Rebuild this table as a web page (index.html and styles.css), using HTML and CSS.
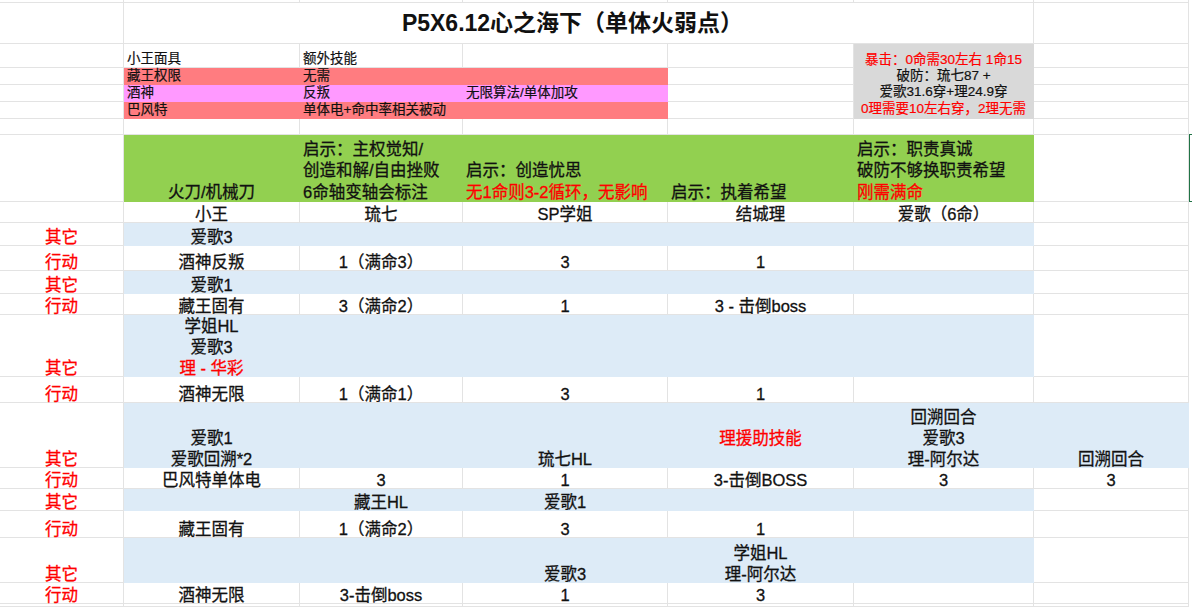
FILE: index.html
```html
<!DOCTYPE html>
<html lang="zh-CN">
<head>
<meta charset="utf-8">
<title>P5X6.12心之海下</title>
<link rel="stylesheet" href="styles.css">
</head>
<body>
<div class="sheet">
  <!-- row 0 -->
  <div class="c"></div><div class="c"></div><div class="c"></div><div class="c"></div><div class="c"></div><div class="c"></div><div class="c"></div>
  <!-- row 1 title -->
  <div class="c"></div><div class="c title"><span>P5X6.12心之海下（单体火弱点）</span></div><div class="c"></div>
  <!-- row 2 -->
  <div class="c"></div><div class="c info"><span>小王面具</span></div><div class="c info"><span>额外技能</span></div><div class="c"></div><div class="c"></div>
  <div class="c gy"><span class="red">暴击：0命需30左右 1命15</span><span>破防：琉七87 +</span><span>爱歌31.6穿+理24.9穿</span><span class="red">0理需要10左右穿，2理无需</span></div>
  <div class="c"></div>
  <!-- row 3 -->
  <div class="c"></div><div class="c info rd"><span>藏王权限</span></div><div class="c info rd"><span>无需</span></div><div class="c info rd"></div><div class="c"></div><div class="c"></div>
  <!-- row 4 -->
  <div class="c"></div><div class="c info pk"><span>酒神</span></div><div class="c info pk"><span>反叛</span></div><div class="c info pk"><span>无限算法/单体加攻</span></div><div class="c"></div><div class="c"></div>
  <!-- row 5 -->
  <div class="c"></div><div class="c info rd"><span>巴风特</span></div><div class="c info rd"><span>单体电+命中率相关被动</span></div><div class="c info rd"></div><div class="c"></div><div class="c"></div>
  <!-- row 6 -->
  <div class="c"></div><div class="c"></div><div class="c"></div><div class="c"></div><div class="c"></div><div class="c"></div><div class="c"></div>
  <!-- row 7 green header -->
  <div class="c"></div>
  <div class="c gr"><span>火刀/机械刀</span></div>
  <div class="c gr lft"><span>启示：主权觉知/<br>创造和解/自由挫败<br>6命轴变轴会标注</span></div>
  <div class="c gr lft"><span>启示：创造忧思<br><em class="red">无1命则3-2循环，无影响</em></span></div>
  <div class="c gr lft"><span>启示：执着希望</span></div>
  <div class="c gr lft"><span>启示：职责真诚<br>破防不够换职责希望<br><em class="red">刚需满命</em></span></div>
  <div class="c sel"></div>
  <!-- row 8 -->
  <div class="c"></div><div class="c"><span>小王</span></div><div class="c"><span>琉七</span></div><div class="c"><span>SP学姐</span></div><div class="c"><span>结城理</span></div><div class="c"><span>爱歌（6命）</span></div><div class="c"></div>
  <!-- row 9 -->
  <div class="c red"><span>其它</span></div><div class="c bl"><span>爱歌3</span></div><div class="c bl"></div><div class="c bl"></div><div class="c bl"></div><div class="c bl"></div><div class="c"></div>
  <!-- row 10 -->
  <div class="c red"><span>行动</span></div><div class="c"><span>酒神反叛</span></div><div class="c"><span>1（满命3）</span></div><div class="c"><span>3</span></div><div class="c"><span>1</span></div><div class="c"></div><div class="c"></div>
  <!-- row 11 -->
  <div class="c red"><span>其它</span></div><div class="c bl"><span>爱歌1</span></div><div class="c bl"></div><div class="c bl"></div><div class="c bl"></div><div class="c bl"></div><div class="c"></div>
  <!-- row 12 -->
  <div class="c red"><span>行动</span></div><div class="c"><span>藏王固有</span></div><div class="c"><span>3（满命2）</span></div><div class="c"><span>1</span></div><div class="c"><span>3 - 击倒boss</span></div><div class="c"></div><div class="c"></div>
  <!-- row 13 -->
  <div class="c red"><span>其它</span></div><div class="c bl"><span>学姐HL<br>爱歌3<br><em class="red">理 - 华彩</em></span></div><div class="c bl"></div><div class="c bl"></div><div class="c bl"></div><div class="c bl"></div><div class="c"></div>
  <!-- row 14 -->
  <div class="c red"><span>行动</span></div><div class="c"><span>酒神无限</span></div><div class="c"><span>1（满命1）</span></div><div class="c"><span>3</span></div><div class="c"><span>1</span></div><div class="c"></div><div class="c"></div>
  <!-- row 15 -->
  <div class="c red"><span>其它</span></div><div class="c bl"><span>爱歌1<br>爱歌回溯*2</span></div><div class="c bl"></div><div class="c bl"><span>琉七HL</span></div><div class="c bl"><span><em class="red">理援助技能</em><br>&nbsp;</span></div><div class="c bl"><span>回溯回合<br>爱歌3<br>理-阿尔达</span></div><div class="c bl"><span>回溯回合</span></div>
  <!-- row 16 -->
  <div class="c red"><span>行动</span></div><div class="c"><span>巴风特单体电</span></div><div class="c"><span>3</span></div><div class="c"><span>1</span></div><div class="c"><span>3-击倒BOSS</span></div><div class="c"><span>3</span></div><div class="c"><span>3</span></div>
  <!-- row 17 -->
  <div class="c red"><span>其它</span></div><div class="c bl"></div><div class="c bl"><span>藏王HL</span></div><div class="c bl"><span>爱歌1</span></div><div class="c bl"></div><div class="c bl"></div><div class="c"></div>
  <!-- row 18 -->
  <div class="c red"><span>行动</span></div><div class="c"><span>藏王固有</span></div><div class="c"><span>1（满命2）</span></div><div class="c"><span>3</span></div><div class="c"><span>1</span></div><div class="c"></div><div class="c"></div>
  <!-- row 19 -->
  <div class="c red"><span>其它</span></div><div class="c bl"></div><div class="c bl"></div><div class="c bl"><span>爱歌3</span></div><div class="c bl"><span>学姐HL<br>理-阿尔达</span></div><div class="c bl"></div><div class="c"></div>
  <!-- row 20 -->
  <div class="c red"><span>行动</span></div><div class="c"><span>酒神无限</span></div><div class="c"><span>3-击倒boss</span></div><div class="c"><span>1</span></div><div class="c"><span>3</span></div><div class="c"></div><div class="c"></div>
  <!-- row 21 -->
  <div class="c"></div><div class="c"></div><div class="c"></div><div class="c"></div><div class="c"></div><div class="c"></div><div class="c"></div>
</div>
</body>
</html>
```
FILE: styles.css
```css
html, body {
  margin: 0;
  padding: 0;
  background: #ffffff;
}

body {
  width: 1192px;
  height: 607px;
  overflow: hidden;
  font-family: "Liberation Sans", "Noto Sans CJK SC", sans-serif;
  color: #111111;
}

.sheet {
  display: grid;
  grid-template-columns: 124px 176px 163px 205px 186px 180px 155px;
  grid-template-rows: 3px 41px 24px 17px 17px 17px 16px 67px 21px 23px 25px 23px 21px 62px 26px 65px 21px 22px 27px 45px 21px 3px;
}

.c {
  box-sizing: border-box;
  border-right: 1px solid #e3e3e3;
  border-bottom: 1px solid #e3e3e3;
  display: flex;
  align-items: flex-end;
  justify-content: center;
  text-align: center;
  font-size: 16.5px;
  line-height: 21px;
  white-space: nowrap;
  -webkit-text-stroke: 0.3px currentColor;
}

.c > span {
  margin-bottom: -3px;
}

.c em {
  font-style: normal;
}

.title {
  grid-column: span 5;
  align-items: center;
  font-size: 23px;
  font-weight: 700;
  padding-right: 12px;
  -webkit-text-stroke: 0;
}

.title > span {
  margin-bottom: 0;
}

.info {
  justify-content: flex-start;
  text-align: left;
  font-size: 13.5px;
  line-height: 16px;
  padding-left: 3px;
  -webkit-text-stroke: 0.2px currentColor;
}

.info > span {
  margin-bottom: 0;
}

.rd {
  background: #ff7c80;
  border-color: #ff7c80;
}

.pk {
  background: #ff99ff;
  border-color: #ff99ff;
}

.gy {
  grid-row: span 4;
  background: #d9d9d9;
  border-color: #d9d9d9;
  flex-direction: column;
  justify-content: flex-end;
  align-items: center;
  font-size: 13.5px;
  line-height: 16.3px;
  padding-bottom: 1px;
  -webkit-text-stroke: 0.2px currentColor;
}

.gy > span {
  margin-bottom: 0;
}

.gr {
  background: #92d050;
  border-color: #92d050;
  line-height: 21.5px;
}

.gr > span {
  margin-bottom: -2px;
}

.lft {
  justify-content: flex-start;
  text-align: left;
  padding-left: 3px;
}

.bl {
  background: #ddebf7;
  border-color: #ddebf7;
}

.red {
  color: #ff0000;
}

.sel {
  position: relative;
}

.sel::after {
  content: "";
  position: absolute;
  top: -1px;
  bottom: -1px;
  right: -4px;
  width: 2px;
  border: 1px solid #217346;
  border-right: 0;
}
```
